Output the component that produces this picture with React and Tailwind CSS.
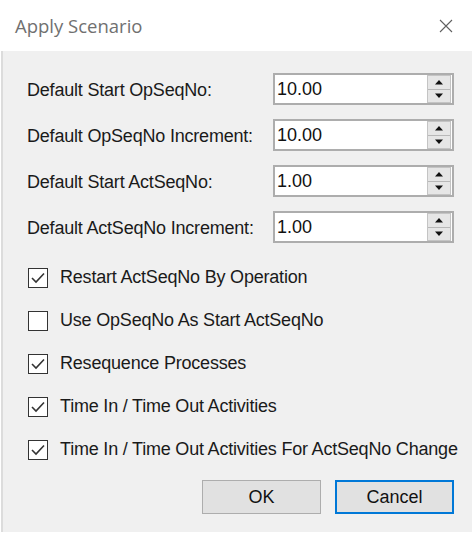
import React from 'react';

const fields = [
  { label: 'Default Start OpSeqNo:', value: '10.00' },
  { label: 'Default OpSeqNo Increment:', value: '10.00' },
  { label: 'Default Start ActSeqNo:', value: '1.00' },
  { label: 'Default ActSeqNo Increment:', value: '1.00' },
];

const options = [
  { label: 'Restart ActSeqNo By Operation', checked: true },
  { label: 'Use OpSeqNo As Start ActSeqNo', checked: false },
  { label: 'Resequence Processes', checked: true },
  { label: 'Time In / Time Out Activities', checked: true },
  { label: 'Time In / Time Out Activities For ActSeqNo Change', checked: true },
];

const Spinner = () => (
  <div className="flex flex-col w-[24px] h-[28px] border border-[#c4c4c4] bg-[#e6e6e6]">
    <div className="flex-1 flex items-center justify-center border-b border-[#b8b8b8]">
      <svg width="10" height="6" viewBox="0 0 10 6">
        <polygon points="1,5.5 9,5.5 5,1" fill="#111" />
      </svg>
    </div>
    <div className="flex-1 flex items-center justify-center">
      <svg width="10" height="6" viewBox="0 0 10 6">
        <polygon points="1,0.5 9,0.5 5,5" fill="#111" />
      </svg>
    </div>
  </div>
);

const CheckBox = ({ checked }) => (
  <div className="w-[20px] h-[20px] border border-[#333] bg-white flex items-center justify-center shrink-0">
    {checked && (
      <svg width="16" height="16" viewBox="0 0 16 16">
        <polyline points="2,8 6,12 14,3.5" fill="none" stroke="#333" strokeWidth="1.6" />
      </svg>
    )}
  </div>
);

const App = () => {
  return (
    <div
      className="w-[474px] h-[535px] bg-white flex flex-col overflow-hidden"
      style={{ fontFamily: '"Liberation Sans", Arial, sans-serif' }}
    >
      <div className="h-[51px] shrink-0 flex items-center justify-between pl-[15px] pr-[21px]">
        <span
          className="text-[18.5px] text-[#707070]"
          style={{ fontFamily: '"Open Sans", "Noto Sans", sans-serif' }}
        >
          Apply Scenario
        </span>
        <svg width="14" height="14" viewBox="0 0 14 14">
          <path d="M1 1 L13 13 M13 1 L1 13" stroke="#606060" strokeWidth="1.1" fill="none" />
        </svg>
      </div>

      <div className="flex-1 ml-[1px] mr-[2px] mb-[3px] border-l-2 border-[#dcdcdc] bg-[#f0f0f0] flex flex-col pl-[24px] pr-[18px] pt-[22px] text-[18px] tracking-[-0.2px] text-[#1a1a1a]">
        <div className="flex flex-col gap-[14px]">
          {fields.map((f) => (
            <div key={f.label} className="flex items-center justify-between h-[32px]">
              <span className="pt-[2px] whitespace-nowrap">{f.label}</span>
              <div className="w-[181px] h-[32px] border-2 border-[#adadad] bg-white flex items-center justify-between pl-[2px] pr-[1px]">
                <span className="tracking-normal text-[#111]">{f.value}</span>
                <Spinner />
              </div>
            </div>
          ))}
        </div>

        <div className="flex flex-col mt-[13px]">
          {options.map((o) => (
            <div key={o.label} className="flex items-center gap-[12px] h-[43px] pl-[1px]">
              <CheckBox checked={o.checked} />
              <span className="whitespace-nowrap">{o.label}</span>
            </div>
          ))}
        </div>

        <div className="flex justify-end gap-[14px] mt-[9px]">
          <button className="w-[119px] h-[34px] bg-[#e1e1e1] border border-[#adadad] text-[18px] tracking-normal text-[#111]">
            OK
          </button>
          <button className="w-[119px] h-[34px] bg-[#e1e1e1] border-2 border-[#0078d7] text-[18px] tracking-normal text-[#111]">
            Cancel
          </button>
        </div>
      </div>
    </div>
  );
};

export default App;
